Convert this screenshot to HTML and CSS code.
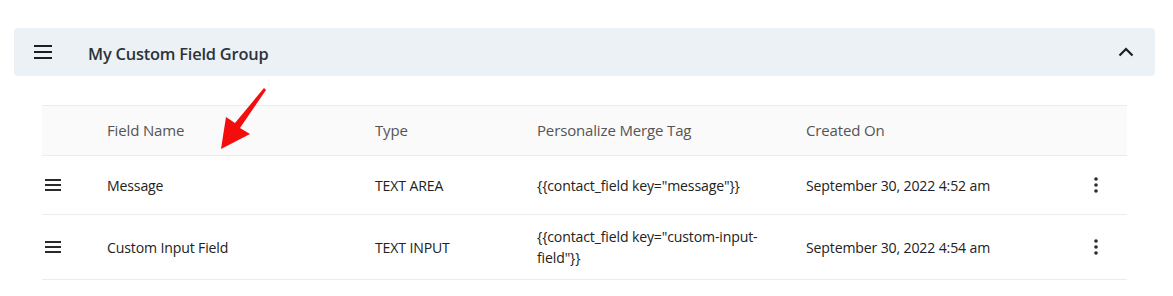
FILE: index.html
```html
<!DOCTYPE html>
<html>
<head>
<meta charset="utf-8">
<link rel="stylesheet" href="styles.css">
</head>
<body>
<div class="page">
  <div class="group-head">
    <svg class="menu-icon" width="18" height="14" viewBox="0 0 18 14"><path d="M0 1h18M0 7h18M0 13h18" stroke="#1e1e1e" stroke-width="2"/></svg>
    <span class="group-title">My Custom Field Group</span>
    <svg class="chevron" width="16" height="10" viewBox="0 0 16 10"><path d="M1.5 8.5L8 2l6.5 6.5" fill="none" stroke="#1e1e1e" stroke-width="2.2"/></svg>
  </div>
  <div class="fields">
    <div class="row head">
      <div></div>
      <div>Field Name</div>
      <div>Type</div>
      <div>Personalize Merge Tag</div>
      <div>Created On</div>
      <div></div>
    </div>
    <div class="row">
      <div><svg class="drag" width="16" height="12" viewBox="0 0 16 12"><path d="M0 1h16M0 6h16M0 11h16" stroke="#2a2a2a" stroke-width="1.8"/></svg></div>
      <div>Message</div>
      <div>TEXT AREA</div>
      <div class="tag">{{contact_field key="message"}}</div>
      <div>September 30, 2022 4:52 am</div>
      <div class="act"><svg width="4" height="16" viewBox="0 0 4 16"><circle cx="2" cy="2" r="1.8" fill="#2a2a2a"/><circle cx="2" cy="8" r="1.8" fill="#2a2a2a"/><circle cx="2" cy="14" r="1.8" fill="#2a2a2a"/></svg></div>
    </div>
    <div class="row">
      <div><svg class="drag" width="16" height="12" viewBox="0 0 16 12"><path d="M0 1h16M0 6h16M0 11h16" stroke="#2a2a2a" stroke-width="1.8"/></svg></div>
      <div>Custom Input Field</div>
      <div>TEXT INPUT</div>
      <div class="tag">{{contact_field key="custom-input-field"}}</div>
      <div>September 30, 2022 4:54 am</div>
      <div class="act"><svg width="4" height="16" viewBox="0 0 4 16"><circle cx="2" cy="2" r="1.8" fill="#2a2a2a"/><circle cx="2" cy="8" r="1.8" fill="#2a2a2a"/><circle cx="2" cy="14" r="1.8" fill="#2a2a2a"/></svg></div>
    </div>
  </div>
  <svg class="arrow" width="60" height="70" viewBox="0 0 60 70"><path d="M44 2 L46 4 L20 42 L30 48 L1 63 L6 31 L15 37 Z" fill="#f30d0d"/></svg>
</div>
</body>
</html>
```
FILE: styles.css
```css
html, body { margin: 0; padding: 0; background: #fff; }
body { font-family: "Open Sans", "Noto Sans", sans-serif; color: #222; }
.page { position: relative; padding: 28px 18px 0 14px; }
.group-head {
  height: 48px;
  background: #ebf1f5;
  border-radius: 4px;
  display: flex;
  align-items: center;
  padding: 0 21px 0 20px;
}
.menu-icon { flex: none; }
.group-title { margin-left: 36px; font-size: 16.4px; font-weight: 600; color: #2d3338; letter-spacing: -0.2px; flex: 1; position: relative; top: 1px; }
.chevron { flex: none; }
.fields { margin: 29px 28px 0 28px; }
.row {
  display: grid;
  grid-template-columns: 65px 268px 162px 269px 1fr 64px;
  align-items: center;
  min-height: 58px;
  padding: 0;
  border-bottom: 1px solid #ececec;
  font-size: 14.1px;
  line-height: 21px;
  letter-spacing: -0.15px;
}
.row > div { padding: 11px 16px 11px 0; }
.row > div:first-child { padding-left: 3px; }
.row.head { min-height: 49px; background: #fafafa; border-top: 1px solid #ececec; color: #555; font-size: 15px; }
.row.head > div { padding: 0 16px 0 0; }
.drag { display: block; }
.tag { padding-right: 24px !important; }
.act { display: flex; justify-content: center; padding-right: 0 !important; }
.act svg { display: block; margin-left: 2px; }
.arrow { position: absolute; left: 220px; top: 86px; }
```
